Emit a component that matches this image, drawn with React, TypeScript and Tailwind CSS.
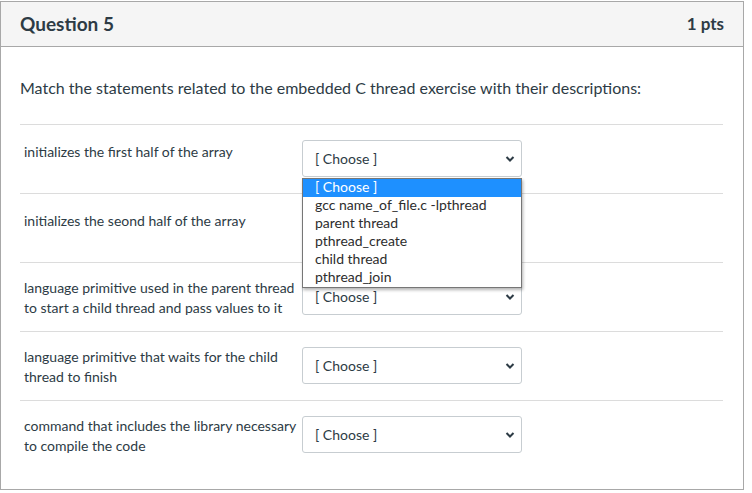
import React from 'react';

const rows = [
  { text: ['initializes the first half of the array'] },
  { text: ['initializes the seond half of the array'] },
  { text: ['language primitive used in the parent thread', 'to start a child thread and pass values to it'] },
  { text: ['language primitive that waits for the child', 'thread to finish'] },
  { text: ['command that includes the library necessary', 'to compile the code'] },
];

const options = ['[ Choose ]', 'gcc name_of_file.c -lpthread', 'parent thread', 'pthread_create', 'child thread', 'pthread_join'];

const Chevron = () => (
  <svg width="10" height="10" viewBox="0 0 10 10" className="text-[#2d3b45]">
    <path d="M1.5 3 L5 6.5 L8.5 3" fill="none" stroke="currentColor" strokeWidth="2" />
  </svg>
);

const FakeSelect: React.FC<{ open?: boolean }> = ({ open }) => (
  <div className="relative">
    <div className="w-[220px] h-[37px] border border-[#c7cdd1] rounded-[3px] bg-white flex items-center justify-between pl-[12px] pr-[6px] text-[14px] text-[#2d3b45]">
      <span>[ Choose ]</span>
      <Chevron />
    </div>
    {open && (
      <div className="absolute left-0 top-[38px] w-[220px] bg-white border border-[#767676] shadow-[1px_2px_3px_rgba(0,0,0,0.3)] z-10 text-[14px] text-[#2d2d2d]">
        {options.map((o, i) => (
          <div key={o} className={`px-[12px] h-[18px] leading-[16px] ${i === 0 ? 'bg-[#1e90ff] text-white' : ''}`}>{o}</div>
        ))}
      </div>
    )}
  </div>
);

export default function App() {
  return (
    <div className="bg-white w-[752px] h-[493px] pt-[1px]" style={{ fontFamily: 'Lato, "Noto Sans", sans-serif' }}>
      <div className="w-[744px] h-[489px] border border-[#a8a8a8] text-[#2d3b45]">
        <div className="h-[45px] bg-[#f5f5f5] border-b border-[#a8a8a8] flex items-center justify-between px-[19px]">
          <h2 className="font-bold text-[19px]">Question 5</h2>
          <span className="font-bold text-[17px]">1 pts</span>
        </div>
        <div className="px-[19px] pt-[30px]">
          <p className="text-[16px] leading-[22px] mb-[25px]">Match the statements related to the embedded C thread exercise with their descriptions:</p>
          <div className="w-[703px]">
            {rows.map((r, i) => (
              <div key={i} className="h-[69px] border-t border-[#dcdcdc] flex items-start pt-[15px]">
                <div className={`w-[282px] pl-[4px] text-[14px] leading-[20px] ${r.text.length === 1 ? 'pt-[2px]' : ''}`}>
                  {r.text.map((t) => (
                    <div key={t} className="whitespace-nowrap">{t}</div>
                  ))}
                </div>
                <FakeSelect open={i === 0} />
              </div>
            ))}
          </div>
        </div>
      </div>
    </div>
  );
}
